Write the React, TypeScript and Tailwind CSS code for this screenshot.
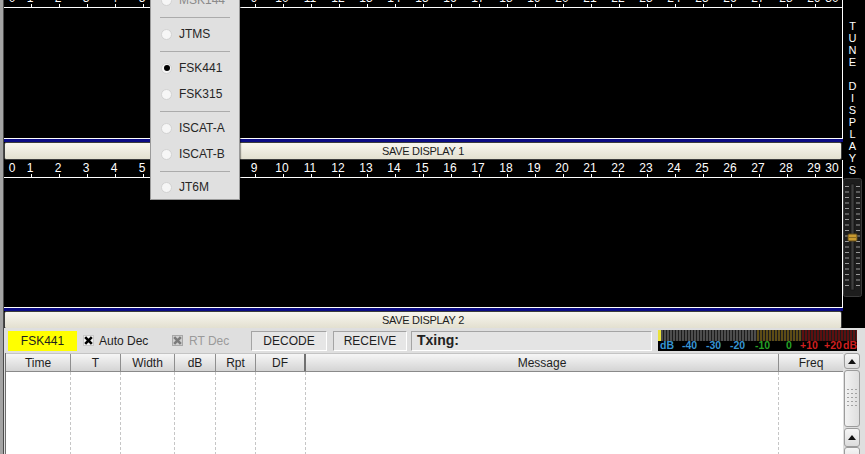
import React from "react";

const SANS = "font-['Liberation_Sans',Arial,sans-serif]";

function Ruler() {
  const marks = Array.from({ length: 31 }, (_, n) => n);
  return (
    <div className="relative h-[18px] border-b border-white">
      {marks.map((n) => {
        const x = n === 0 ? 8 : n === 30 ? 828 : 28 * n - 2;
        return (
          <React.Fragment key={n}>
            <span
              className="absolute top-[1px] -translate-x-1/2 text-[12px] leading-[14px] text-white"
              style={{ left: x }}
            >
              {n}
            </span>
            {n > 0 && n < 30 && (
              <span className="absolute bottom-0 h-[3px] w-px bg-white" style={{ left: 28 * n - 1 }} />
            )}
          </React.Fragment>
        );
      })}
    </div>
  );
}

function Display({ title, area }: { title: string; area: string }) {
  return (
    <div>
      <div className="border-r border-white">
        <Ruler />
        <div className={area} />
      </div>
      <div className="h-px bg-white" />
      <div className="h-[3px] bg-[#0b0b84]" />
      <div className="mr-[1px] flex h-[18px] items-center justify-center rounded-[2px] border border-[#3c3c3c] bg-linear-to-b from-[#f8f6ef] to-[#e3e0d0] text-[11px] tracking-[-0.3px] text-[#1c1c1c]">
        {title}
      </div>
    </div>
  );
}

function Slider() {
  const ticks = Array.from({ length: 19 }, (_, i) => 8 + i * 5.5);
  return (
    <svg width="19" height="119" className="mt-[2px] block">
      <rect x="0.5" y="0.5" width="18" height="118" rx="2" fill="#1d1d1d" stroke="#3b3b3b" />
      <rect x="8" y="6" width="3" height="106" fill="#3e3e3e" stroke="#0e0e0e" strokeWidth="0.6" />
      {ticks.map((y) => (
        <g key={y}>
          <rect x="2" y={y} width="4" height="1" fill="#9a9a9a" />
          <rect x="13" y={y} width="4" height="1" fill="#9a9a9a" />
        </g>
      ))}
      <rect x="5" y="56" width="9" height="7" rx="1" fill="#c89a30" stroke="#5e4a1c" />
      <rect x="6" y="59" width="7" height="1" fill="#8a6a20" />
    </svg>
  );
}

type MenuItem = { label: string; checked?: boolean; dim?: boolean } | "sep";

const menuItems: MenuItem[] = [
  { label: "MSK144", dim: true },
  "sep",
  { label: "JTMS" },
  "sep",
  { label: "FSK441", checked: true },
  { label: "FSK315" },
  "sep",
  { label: "ISCAT-A" },
  { label: "ISCAT-B" },
  "sep",
  { label: "JT6M" },
];

function ModeMenu() {
  return (
    <div className="absolute left-[150px] top-[-14px] w-[90px] border border-[#9a9a9a] bg-[#e0e0e0] shadow-[1px_1px_1px_rgba(0,0,0,0.35)]">
      {menuItems.map((it, i) => {
        if (it === "sep")
          return (
            <div key={i} className="flex h-[8px] items-center px-[9px]">
              <div className="h-px w-full bg-[#ababab]" />
            </div>
          );
        const last = i === menuItems.length - 1;
        return (
          <div key={i} className={`flex items-center pl-[10px] ${last ? "h-[24px]" : "h-[26px]"}`}>
            <span className="flex h-[11px] w-[11px] items-center justify-center rounded-full border border-[#d2d2d2] bg-[#f6f6f6]">
              {it.checked && <span className="h-[6px] w-[6px] rounded-full bg-black" />}
            </span>
            <span className={`ml-[7px] text-[12px] ${it.dim ? "text-[#8a8a8a]" : "text-[#262626]"}`}>{it.label}</span>
          </div>
        );
      })}
    </div>
  );
}

function CheckX({ disabled }: { disabled?: boolean }) {
  return (
    <span
      className={`flex h-[11px] w-[11px] items-center justify-center border ${
        disabled ? "border-[#a8a8a8] bg-[#cfcfcf]" : "border-[#c8c8c8] bg-[#f2f2f2]"
      }`}
    >
      <svg width="9" height="9" viewBox="0 0 9 9">
        <path d="M1.2 1.2L7.8 7.8M7.8 1.2L1.2 7.8" stroke={disabled ? "#7a7a7a" : "#000"} strokeWidth="2.6" />
      </svg>
    </span>
  );
}

const meterLabels = [
  { t: "dB", c: "left-[2px] text-[#3794d2]" },
  { t: "-40", c: "left-[24px] text-[#3794d2]" },
  { t: "-30", c: "left-[48px] text-[#3794d2]" },
  { t: "-20", c: "left-[72px] text-[#3794d2]" },
  { t: "-10", c: "left-[97px] text-[#26a126]" },
  { t: "0", c: "left-[128px] text-[#26a126]" },
  { t: "+10", c: "left-[142px] text-[#cf1f1f]" },
  { t: "+20", c: "left-[166px] text-[#cf1f1f]" },
  { t: "dB", c: "left-[185px] text-[#cf1f1f]" },
];

function Meter() {
  const bars = Array.from({ length: 66 }, (_, i) => 3 + i * 3);
  const color = (x: number) => (x < 99 ? "#4d4d4d" : x < 144 ? "#5d4c16" : "#5d1010");
  return (
    <div className="relative ml-[6px] h-[21px] w-[199px] bg-black">
      <svg width="199" height="11" className="block">
        <rect width="199" height="11" fill="#1c1c1c" />
        <rect x="0" y="0" width="3" height="11" fill="#eae23a" />
        {bars.map((x) => (
          <rect key={x} x={x} y="0" width="2" height="11" fill={color(x)} />
        ))}
      </svg>
      {meterLabels.map((l, i) => (
        <span key={i} className={`absolute top-[10px] text-[10.5px] font-bold leading-[11px] ${l.c}`}>
          {l.t}
        </span>
      ))}
    </div>
  );
}

const columns = [
  { t: "Time", w: "w-[65px]" },
  { t: "T", w: "w-[50px]" },
  { t: "Width", w: "w-[54px]" },
  { t: "dB", w: "w-[41px]" },
  { t: "Rpt", w: "w-[40px]" },
  { t: "DF", w: "w-[50px]" },
  { t: "Message", w: "w-[473px]" },
  { t: "Freq", w: "w-[64px]" },
];

function ScrollBtn({ dir, h }: { dir: "up" | "down"; h: string }) {
  return (
    <div
      className={`${h} flex shrink-0 items-center justify-center rounded-[3px] border border-[#9c9c9c] bg-linear-to-b from-[#f6f6f6] to-[#dcdcdc]`}
    >
      <svg width="8" height="5" viewBox="0 0 8 5">
        <path d={dir === "up" ? "M0 5L4 0L8 5Z" : "M0 0L4 5L8 0Z"} fill="#111" />
      </svg>
    </div>
  );
}

function Scrollbar() {
  return (
    <div className="ml-[1px] flex w-[16px] flex-col">
      <ScrollBtn dir="up" h="h-[16px]" />
      <div className="mt-[1px] flex h-[57px] shrink-0 items-center justify-center rounded-[3px] border border-[#9c9c9c] bg-linear-to-r from-[#f2f2f2] to-[#dedede]">
        <svg width="11" height="19" viewBox="0 0 11 19">
          {[0, 4, 8, 12, 16].map((y) =>
            [0, 4, 8].map((x) => <rect key={`${x}-${y}`} x={x} y={y} width="2" height="1" fill="#a2a2a2" />)
          )}
        </svg>
      </div>
      <div className="mt-[1px]">
        <ScrollBtn dir="up" h="h-[19px]" />
      </div>
      <ScrollBtn dir="down" h="h-[18px]" />
    </div>
  );
}

export default function App() {
  return (
    <div className={`relative flex h-[454px] w-[865px] overflow-hidden bg-black ${SANS}`}>
      <div className="h-full w-[4px] shrink-0 border-r border-[#4a4a4a] bg-[#a4a4a4]" />

      <div className="flex w-[861px] flex-col">
        {/* displays + tune strip */}
        <div className="flex h-[328px] shrink-0 overflow-hidden">
          <div className="-mt-[10px] w-[839px]">
            <Display title="SAVE DISPLAY 1" area="h-[130px] bg-black" />
            <Display title="SAVE DISPLAY 2" area="h-[129px] bg-black" />
          </div>
          <div className="w-[22px] bg-black">
            <div className="flex w-[19px] flex-col items-center pt-[20px] text-[11px] leading-[12px] text-white">
              {"TUNE DISPLAYS".split("").map((c, i) => (
                <span key={i} className="h-[12px]">
                  {c === " " ? "\u00a0" : c}
                </span>
              ))}
            </div>
            <Slider />
          </div>
        </div>

        {/* decode controls and table */}
        <div className="flex flex-1 flex-col bg-[#dfdfdf]">
          <div className="flex h-[25px] shrink-0 items-center pl-[4px] text-[12px] text-[#1e1e1e]">
            <div className="flex h-[20px] w-[69px] items-center justify-center bg-[#ffff00]">FSK441</div>
            <div className="ml-[6px]">
              <CheckX />
            </div>
            <span className="ml-[5px] w-[73px]">Auto Dec</span>
            <CheckX disabled />
            <span className="ml-[6px] w-[62px] text-[#9a9a9a]">RT Dec</span>
            <div className="flex h-[20px] w-[76px] items-center justify-center border border-t-[#a4a4a4] border-l-[#a4a4a4] border-b-white border-r-white bg-[#e6e6e6]">
              DECODE
            </div>
            <div className="ml-[6px] flex h-[20px] w-[74px] items-center justify-center border border-t-[#a4a4a4] border-l-[#a4a4a4] border-b-white border-r-white bg-[#e6e6e6]">
              RECEIVE
            </div>
            <div className="ml-[4px] flex h-[20px] w-[241px] items-center border border-t-[#a4a4a4] border-l-[#a4a4a4] border-b-white border-r-white bg-[#e4e4e4] pl-[5px] text-[14px] font-bold text-[#222]">
              Txing:
            </div>
            <Meter />
          </div>

          <div className="flex min-h-0 flex-1">
            <div className="ml-[1px] flex w-[838px] flex-col border-l border-[#6e6e6e]">
              <div className="flex h-[19px] shrink-0 border-y border-t-[#c4c4c4] border-b-[#8a8a8a]">
                {columns.map((c, i) => (
                  <div
                    key={c.t}
                    className={`${c.w} flex items-center justify-center bg-linear-to-b from-[#f6f6f6] to-[#d4d4d4] text-[12px] text-[#1e1e1e] ${
                      i === 5 ? "border-r-2 border-[#707070]" : i === 7 ? "" : "border-r border-[#8e8e8e]"
                    }`}
                  >
                    {c.t}
                  </div>
                ))}
              </div>
              <div className="flex flex-1 bg-white">
                {columns.map((c, i) => (
                  <div
                    key={c.t}
                    className={`${c.w} h-full ${i < 7 ? "border-r border-dashed border-[#c6c6c6]" : ""}`}
                  />
                ))}
              </div>
            </div>
            <Scrollbar />
          </div>
        </div>
      </div>

      <ModeMenu />
    </div>
  );
}
